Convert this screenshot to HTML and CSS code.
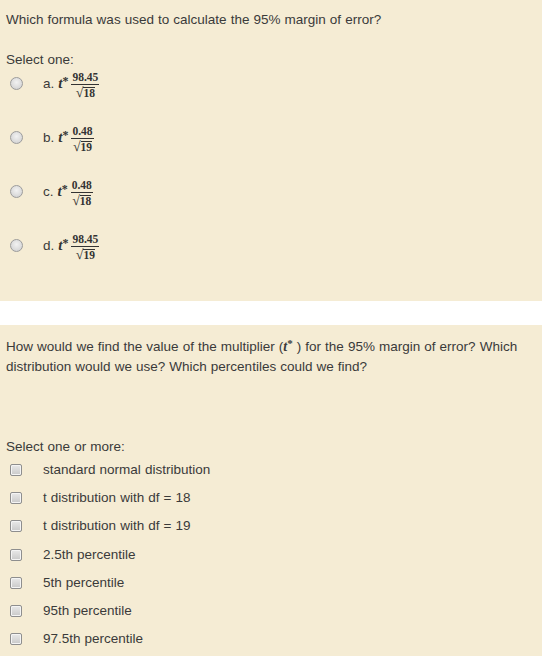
FILE: index.html
```html
<!DOCTYPE html>
<html>
<head>
<meta charset="utf-8">
<link rel="stylesheet" href="styles.css">
</head>
<body>
<div class="que que1">
  <div class="qtext">Which formula was used to calculate the 95% margin of error?</div>
  <div class="prompt">Select one:</div>
  <div class="answers">
    <div class="opt"><span class="radio"></span><span class="lab">a.</span><span class="t">t<span class="st">*</span></span><span class="frac"><span class="num">98.45</span><span class="den"><span class="sq">√</span><span class="rad">18</span></span></span></div>
    <div class="opt"><span class="radio"></span><span class="lab">b.</span><span class="t">t<span class="st">*</span></span><span class="frac"><span class="num">0.48</span><span class="den"><span class="sq">√</span><span class="rad">19</span></span></span></div>
    <div class="opt"><span class="radio"></span><span class="lab">c.</span><span class="t">t<span class="st">*</span></span><span class="frac"><span class="num">0.48</span><span class="den"><span class="sq">√</span><span class="rad">18</span></span></span></div>
    <div class="opt"><span class="radio"></span><span class="lab">d.</span><span class="t">t<span class="st">*</span></span><span class="frac"><span class="num">98.45</span><span class="den"><span class="sq">√</span><span class="rad">19</span></span></span></div>
  </div>
</div>
<div class="gap"></div>
<div class="que que2">
  <div class="qtext">How would we find the value of the multiplier (<span class="tm">t<span class="st2">*</span></span>) for the 95% margin of error? Which distribution would we use? Which percentiles could we find?</div>
  <div class="prompt2">Select one or more:</div>
  <div class="checks">
    <div class="crow"><span class="cbox"></span><span class="clab">standard normal distribution</span></div>
    <div class="crow"><span class="cbox"></span><span class="clab">t distribution with df = 18</span></div>
    <div class="crow"><span class="cbox"></span><span class="clab">t distribution with df = 19</span></div>
    <div class="crow"><span class="cbox"></span><span class="clab">2.5th percentile</span></div>
    <div class="crow"><span class="cbox"></span><span class="clab">5th percentile</span></div>
    <div class="crow"><span class="cbox"></span><span class="clab">95th percentile</span></div>
    <div class="crow"><span class="cbox"></span><span class="clab">97.5th percentile</span></div>
  </div>
</div>
</body>
</html>
```
FILE: styles.css
```css
html, body { margin: 0; padding: 0; background: #ffffff; }
body {
  font-family: "Liberation Sans", Arial, sans-serif;
  font-size: 13.5px;
  word-spacing: 0.3px;
  color: #3a3a3a;
  width: 542px;
}
.que { background: #f5ecd4; padding-left: 6px; }
.que1 { height: 301px; padding-top: 10px; box-sizing: border-box; }
.gap { height: 24px; background: #ffffff; }
.que2 { height: 331px; padding-top: 12px; box-sizing: border-box; padding-right: 10px; }
.qtext { line-height: 20px; }
.prompt { margin-top: 20px; line-height: 20px; }
.answers { display: flex; flex-direction: column; }
.opt { height: 26px; margin-bottom: 28px; display: flex; align-items: center; }
.radio {
  width: 11px; height: 11px; border-radius: 50%;
  border: 1px solid #9c9c9c;
  background: radial-gradient(circle at 50% 40%, #f2f2f2 0%, #d8d8d8 70%, #c8c8c8 100%);
  margin-left: 4px; margin-right: 20px; flex: none;
}
.lab { margin-right: 4px; }
.t { font-family: "Liberation Serif", "Times New Roman", serif; font-style: italic; font-weight: bold; font-size: 15px; margin-right: 3px; color: #333; line-height: 15px; }
.st { font-size: 12px; font-style: normal; vertical-align: 3px; line-height: 0; }
.frac {
  display: inline-flex; flex-direction: column; align-items: center;
  font-family: "Liberation Serif", "Times New Roman", serif; font-weight: bold; font-size: 11.5px;
  line-height: 11px; margin-top: 4px; color: #333;
}
.num { border-bottom: 1px solid #333; padding: 0 1px 1px; }
.den { display: flex; align-items: flex-end; padding-top: 1px; }
.sq { font-weight: normal; font-size: 14px; line-height: 13px; }
.rad { border-top: 1px solid #333; line-height: 11px; }
.tm { font-family: "Liberation Serif", "Times New Roman", serif; font-style: italic; font-weight: bold; font-size: 14px; margin-right: 4px; line-height: 0; }
.st2 { font-size: 11px; font-style: normal; vertical-align: 4px; line-height: 0; }
.prompt2 { margin-top: 60px; line-height: 20px; margin-bottom: -1px; }
.checks { display: flex; flex-direction: column; }
.crow { height: 28.2px; display: flex; align-items: center; }
.cbox {
  width: 10px; height: 10px; border: 1px solid #8e8e8e; border-radius: 2px;
  background: linear-gradient(#e9e9e9, #c9c9c9);
  box-shadow: inset 0 0 0 1px #f4f4f4;
  margin-left: 4px; margin-right: 21px; flex: none;
}
.clab { line-height: 20px; }
```
